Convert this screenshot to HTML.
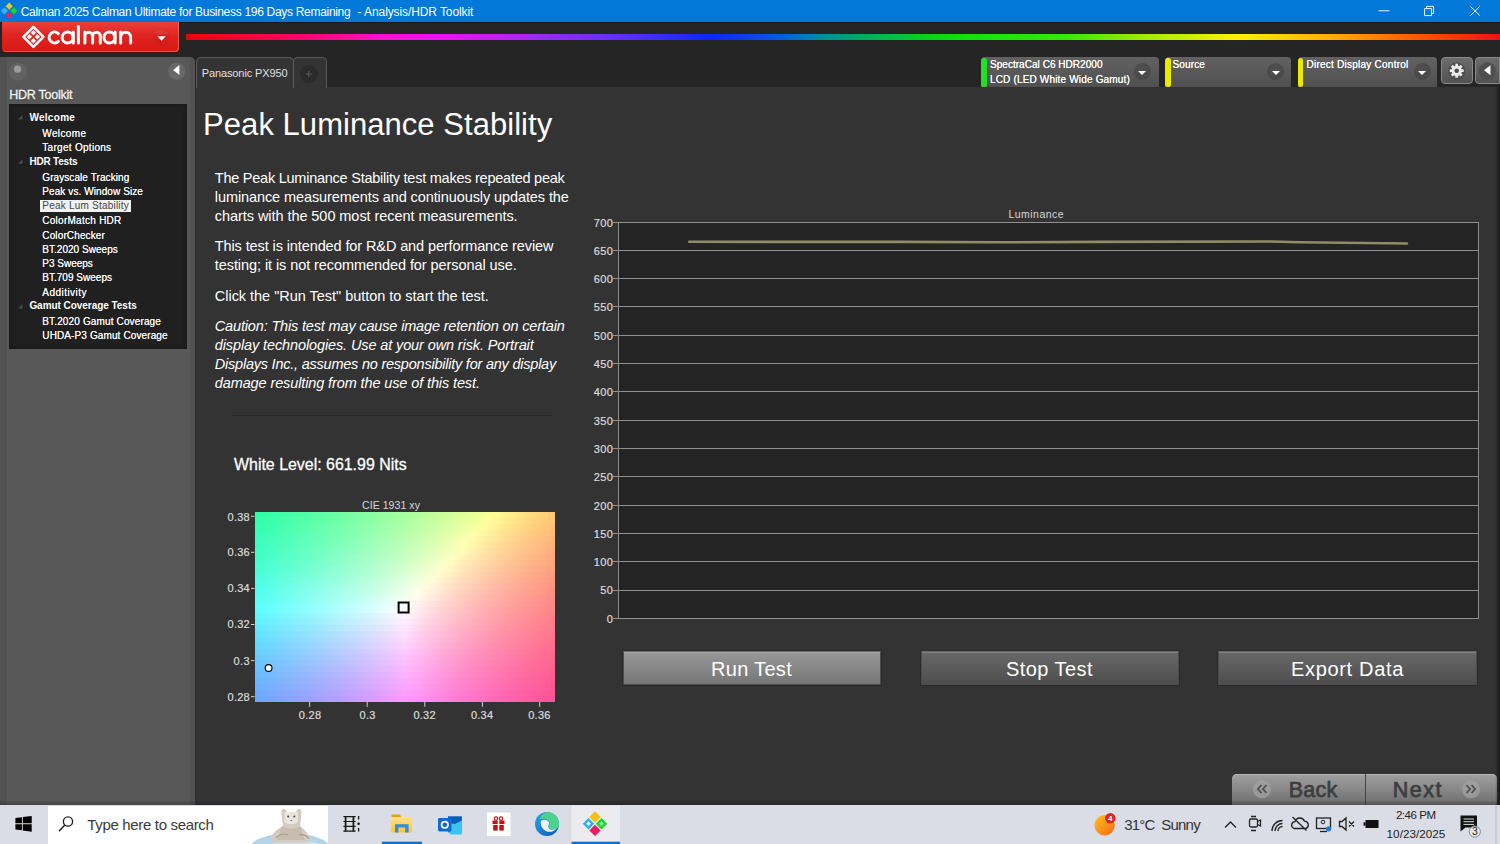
<!DOCTYPE html>
<html><head><meta charset="utf-8"><title>Calman</title>
<style>
*{box-sizing:border-box;margin:0;padding:0}
html,body{width:1500px;height:844px;overflow:hidden;background:#333333;font-family:"Liberation Sans",sans-serif;color:#fff}
.abs{position:absolute}
.t{position:absolute;white-space:pre;line-height:normal}
#titlebar{left:0;top:0;width:1500px;height:23.1px;background:#0278d8}
#topband{left:0;top:22.3px;width:1500px;height:65.2px;background:#252525;border-top:0.9px solid #0c1a28}
#calbtn{left:1.5px;top:22.3px;width:177.3px;height:29.7px;border-radius:0 0 4px 4px;background:linear-gradient(#e8403a 0%,#e02420 45%,#d81814 100%);box-shadow:inset -1px -1px 0 rgba(255,170,160,.4),0 1px 1px #501010}
#rainbow{left:185.6px;top:34.4px;width:1314.4px;height:5.6px;border-radius:1px 0 0 1px;background:linear-gradient(90deg,#f00000 0%,#ff0060 8%,#ff10d0 15%,#f010f0 19%,#a828f0 26%,#6030f8 33%,#0828ff 40%,#0858e0 45%,#0088a8 48%,#00a868 51%,#08d020 56%,#10e010 59%,#38e808 67%,#a0ec00 73%,#fff000 80%,#ffb000 87%,#ff6000 93%,#f01010 100%)}
#sidebar{left:0;top:57.3px;width:194.6px;height:748px;background:#525252;border-radius:0 5px 0 0}
#sideinner{left:6.6px;top:57.3px;width:183.6px;height:748px;background:#585858}
#tree{left:9.3px;top:103.7px;width:177.3px;height:245px;background:#202020;box-shadow:inset 0 0 3px 1px #181818}
#sel{left:40px;top:199.5px;width:90.6px;height:12.3px;background:#f2f2f2}
#main{left:195.5px;top:87.3px;width:1304.5px;height:718px;background:#333333}
.tab{top:57px;height:30.5px;background:#343434;border:1px solid #5a5a5a;border-bottom:none;border-radius:5px 5px 0 0}
.selbox{top:57px;height:30px;border-radius:4px 4px 0 0;background:linear-gradient(#626262,#505050);overflow:hidden}
.selbox i{position:absolute;left:0;top:0.5px;width:5.8px;height:29.5px;border-radius:2.5px}
.dd{width:17px;height:17px;border-radius:50%;background:radial-gradient(circle at 50% 30%,#505050,#464646)}
.dd:after{content:"";position:absolute;left:4.2px;top:7.9px;border-left:4.3px solid transparent;border-right:4.3px solid transparent;border-top:4.8px solid #fff}
.btn{top:651px;height:34.3px;border:1px solid #4c4c4c;border-top-color:#6a6a6a;box-shadow:inset 0 1px 0 rgba(255,255,255,.16),0 0 0 1px #2b2b2b}
#taskbar{left:0;top:804.8px;width:1500px;height:39.2px;background:#dadde5}
#search{left:47.6px;top:805.5px;width:280px;height:38.5px;background:#fff;overflow:hidden}
</style></head><body>
<div id="titlebar" class="abs"></div>
<div id="topband" class="abs"></div>
<div id="calbtn" class="abs"></div>
<div id="rainbow" class="abs"></div>
<div id="sidebar" class="abs"></div>
<div id="sideinner" class="abs"></div>
<div id="tree" class="abs"></div>
<div id="sel" class="abs"></div>
<div id="main" class="abs"></div>
<div class="abs" style="left:194.6px;top:87.3px;width:1.8px;height:714px;background:#2d2d2d"></div>
<!-- tabs -->
<div class="abs tab" style="left:196px;width:97.5px"></div>
<div class="abs tab" style="left:292.5px;width:34.2px"></div>
<div class="abs" style="left:299.7px;top:65px;width:18px;height:18px;border-radius:50%;background:#2b2b2b"></div>
<!-- selectors -->
<div class="abs selbox" style="left:981px;width:178px"><i style="background:#22e022"></i></div>
<div class="abs selbox" style="left:1164.8px;width:126.4px"><i style="background:#eaea00"></i></div>
<div class="abs selbox" style="left:1297.6px;width:139.4px"><i style="background:#eaea00"></i></div>
<div class="abs dd" style="left:1134.3px;top:62.7px"></div>
<div class="abs dd" style="left:1267.4px;top:62.7px"></div>
<div class="abs dd" style="left:1413.7px;top:62.7px"></div>
<div class="abs" style="left:1440.6px;top:57.2px;width:32px;height:27.3px;border-radius:4px;background:linear-gradient(#6c6c6c,#525252);border:1.2px solid #8a8a8a"></div>
<div class="abs" style="left:1474.5px;top:57.2px;width:25.5px;height:27.3px;border-radius:4px 0 0 4px;border-right:none;background:linear-gradient(#6c6c6c,#525252);border:1.2px solid #8a8a8a"></div>
<!-- separator -->
<div class="abs" style="left:232px;top:414.5px;width:320px;height:1px;background:#272727"></div>
<!-- buttons -->
<div class="abs btn" style="left:622.8px;width:258px;background:linear-gradient(#989898,#8a8a8a 40%,#767676)"></div>
<div class="abs btn" style="left:921px;width:258px;background:linear-gradient(#686868,#4e4e4e)"></div>
<div class="abs btn" style="left:1218px;width:259px;background:linear-gradient(#686868,#4e4e4e)"></div>
<!-- back/next -->
<div class="abs" style="left:1232px;top:774px;width:264.6px;height:31px;border-radius:5px 5px 0 0;background:linear-gradient(#a0a0a0,#8a8a8a 45%,#6c6c6c);box-shadow:inset 0 1px 0 #b4b4b4"></div>
<div class="abs" style="left:1364.7px;top:774px;width:1.2px;height:31px;background:#444"></div>
<div class="abs" style="left:617.9px;top:222.1px;width:861.2px;height:396.6px;background:#242424;border:1px solid #8e8e8e"></div>
<div class="abs" style="left:613.4px;top:222px;width:865.7px;height:1px;background:#919191"></div><div class="abs" style="left:613.4px;top:250px;width:865.7px;height:1px;background:#919191"></div><div class="abs" style="left:613.4px;top:278px;width:865.7px;height:1px;background:#919191"></div><div class="abs" style="left:613.4px;top:306px;width:865.7px;height:1px;background:#919191"></div><div class="abs" style="left:613.4px;top:335px;width:865.7px;height:1px;background:#919191"></div><div class="abs" style="left:613.4px;top:363px;width:865.7px;height:1px;background:#919191"></div><div class="abs" style="left:613.4px;top:391px;width:865.7px;height:1px;background:#919191"></div><div class="abs" style="left:613.4px;top:420px;width:865.7px;height:1px;background:#919191"></div><div class="abs" style="left:613.4px;top:448px;width:865.7px;height:1px;background:#919191"></div><div class="abs" style="left:613.4px;top:476px;width:865.7px;height:1px;background:#919191"></div><div class="abs" style="left:613.4px;top:505px;width:865.7px;height:1px;background:#919191"></div><div class="abs" style="left:613.4px;top:533px;width:865.7px;height:1px;background:#919191"></div><div class="abs" style="left:613.4px;top:561px;width:865.7px;height:1px;background:#919191"></div><div class="abs" style="left:613.4px;top:590px;width:865.7px;height:1px;background:#919191"></div><div class="abs" style="left:613.4px;top:618px;width:865.7px;height:1px;background:#919191"></div>
<svg class="abs" style="left:0;top:0" width="1500" height="844"><polyline points="689.3,241.8 900,241.9 1000,242.3 1100,241.9 1270,241.5 1300,242.2 1407,243.5" fill="none" stroke="#8e8e66" stroke-width="2.6" stroke-linecap="round"/></svg>
<div class="abs" style="left:254.7px;top:512.3px;width:300.8px;height:189.5px;overflow:hidden"><div style="height:5.9219px;background:linear-gradient(90deg,#2cffa9,#34ffa8,#3dffa8,#46ffa7,#4fffa6,#58ffa5,#61ffa5,#6bffa4,#74ffa3,#7effa2,#88ffa1,#92ffa1,#9cffa0,#a7ff9f,#b2ff9e,#bdff9d,#c8ff9c,#d3ff9b,#dfff9a,#ebff99,#f7ff98,#fffb94,#ffef8d,#ffe485,#ffda7e,#ffd178,#ffc872)"></div><div style="height:5.9219px;background:linear-gradient(90deg,#2effae,#37ffad,#40ffac,#49ffac,#52ffab,#5bffaa,#64ffa9,#6effa9,#78ffa8,#82ffa7,#8cffa6,#96ffa5,#a1ffa4,#abffa4,#b6ffa3,#c2ffa2,#cdffa1,#d9ffa0,#e4ff9f,#f1ff9e,#fdff9d,#fff596,#ffe98e,#ffdf87,#ffd580,#ffcc79,#ffc373)"></div><div style="height:5.9219px;background:linear-gradient(90deg,#31ffb2,#39ffb1,#42ffb1,#4bffb0,#55ffaf,#5effaf,#68ffae,#71ffad,#7bffad,#86ffac,#90ffab,#9affaa,#a5ffa9,#b0ffa9,#bbffa8,#c7ffa7,#d2ffa6,#deffa5,#eaffa4,#f7ffa3,#fffba0,#ffef97,#ffe48f,#ffda88,#ffd081,#ffc77b,#ffbf75)"></div><div style="height:5.9219px;background:linear-gradient(90deg,#33ffb7,#3cffb6,#45ffb6,#4effb5,#58ffb4,#61ffb4,#6bffb3,#75ffb2,#7fffb1,#8affb1,#94ffb0,#9fffaf,#aaffae,#b5ffae,#c0ffad,#ccffac,#d8ffab,#e4ffaa,#f0ffaa,#fdffa9,#fff5a1,#ffe999,#ffde91,#ffd489,#ffcb83,#ffc27c,#ffba76)"></div><div style="height:5.9219px;background:linear-gradient(90deg,#36ffbc,#3fffbb,#48ffba,#52ffba,#5bffb9,#65ffb9,#6fffb8,#79ffb7,#83ffb7,#8effb6,#98ffb5,#a3ffb4,#aeffb4,#baffb3,#c5ffb2,#d1ffb1,#ddffb1,#eaffb0,#f6ffaf,#fffbab,#ffefa2,#ffe49a,#ffd992,#ffcf8b,#ffc684,#ffbe7e,#ffb678)"></div><div style="height:5.9219px;background:linear-gradient(90deg,#39ffc0,#42ffc0,#4bffbf,#55ffbf,#5effbe,#68ffbe,#72ffbd,#7dffbc,#87ffbc,#92ffbb,#9dffba,#a8ffba,#b3ffb9,#bfffb8,#cbffb8,#d7ffb7,#e3ffb6,#f0ffb5,#fdffb5,#fff5ad,#ffe9a4,#ffde9b,#ffd493,#ffca8c,#ffc185,#ffb97f,#ffb179)"></div><div style="height:5.9219px;background:linear-gradient(90deg,#3bffc6,#45ffc5,#4effc4,#58ffc4,#62ffc3,#6cffc3,#76ffc2,#81ffc2,#8bffc1,#96ffc1,#a1ffc0,#adffbf,#b8ffbf,#c4ffbe,#d0ffbd,#dcffbd,#e9ffbc,#f6ffbb,#fffbb8,#ffefae,#ffe3a5,#ffd89c,#ffcf95,#ffc58d,#ffbd87,#ffb580,#ffad7a)"></div><div style="height:5.9219px;background:linear-gradient(90deg,#3effcb,#48ffca,#51ffca,#5bffc9,#65ffc9,#6fffc8,#7affc8,#85ffc7,#90ffc7,#9bffc6,#a6ffc6,#b2ffc5,#bdffc4,#c9ffc4,#d6ffc3,#e2ffc3,#efffc2,#fcffc1,#fff5b9,#ffe9af,#ffdda6,#ffd39e,#ffc996,#ffc08f,#ffb888,#ffb081,#ffa97b)"></div><div style="height:5.9219px;background:linear-gradient(90deg,#41ffd0,#4bffd0,#55ffcf,#5fffcf,#69ffce,#73ffce,#7effcd,#89ffcd,#94ffcc,#9fffcc,#abffcb,#b7ffcb,#c3ffca,#cfffca,#dcffc9,#e8ffc9,#f6ffc8,#fffbc4,#ffeeba,#ffe3b0,#ffd8a7,#ffce9f,#ffc497,#ffbc90,#ffb389,#ffac83,#ffa47d)"></div><div style="height:5.9219px;background:linear-gradient(90deg,#44ffd5,#4effd5,#58ffd5,#62ffd4,#6dffd4,#77ffd3,#82ffd3,#8dffd3,#98ffd2,#a4ffd2,#b0ffd1,#bcffd1,#c8ffd0,#d5ffd0,#e2ffcf,#efffcf,#fcffce,#fff5c5,#ffe8bb,#ffddb1,#ffd2a8,#ffc9a0,#ffbf98,#ffb791,#ffaf8a,#ffa784,#ffa07e)"></div><div style="height:5.9219px;background:linear-gradient(90deg,#47ffdb,#51ffdb,#5bffda,#66ffda,#70ffda,#7bffd9,#86ffd9,#92ffd9,#9dffd8,#a9ffd8,#b5ffd7,#c1ffd7,#ceffd7,#dbffd6,#e8ffd6,#f5ffd5,#fffbd2,#ffeec6,#ffe2bc,#ffd7b2,#ffcdaa,#ffc3a1,#ffba9a,#ffb292,#ffaa8c,#ffa385,#ff9c7f)"></div><div style="height:5.9219px;background:linear-gradient(90deg,#4affe1,#54ffe1,#5fffe0,#69ffe0,#74ffe0,#7fffdf,#8bffdf,#96ffdf,#a2ffdf,#aeffde,#baffde,#c7ffde,#d4ffdd,#e1ffdd,#eeffdc,#fcffdc,#fff4d3,#ffe8c7,#ffdcbd,#ffd2b4,#ffc8ab,#ffbea2,#ffb69b,#ffae93,#ffa68d,#ff9f86,#ff9880)"></div><div style="height:5.9219px;background:linear-gradient(90deg,#4effe7,#58ffe7,#62ffe6,#6dffe6,#78ffe6,#84ffe6,#8fffe5,#9bffe5,#a7ffe5,#b3ffe5,#c0ffe4,#cdffe4,#daffe4,#e7ffe4,#f5ffe3,#fffbe0,#ffeed3,#ffe2c8,#ffd6be,#ffccb5,#ffc2ac,#ffb9a4,#ffb19c,#ffa995,#ffa28e,#ff9b88,#ff9482)"></div><div style="height:5.9219px;background:linear-gradient(90deg,#51ffed,#5bffed,#66ffed,#71ffed,#7dffec,#88ffec,#94ffec,#a0ffec,#acffec,#b9ffeb,#c5ffeb,#d2ffeb,#e0ffeb,#eeffeb,#fcffea,#fff4e0,#ffe8d4,#ffdcc9,#ffd1bf,#ffc7b6,#ffbdad,#ffb4a5,#ffac9d,#ffa596,#ff9d8f,#ff9789,#ff9083)"></div><div style="height:5.9219px;background:linear-gradient(90deg,#54fff3,#5ffff3,#6afff3,#75fff3,#81fff3,#8dfff3,#99fff3,#a5fff3,#b1fff3,#befff2,#cbfff2,#d9fff2,#e6fff2,#f4fff2,#fffbee,#ffeee1,#ffe1d5,#ffd6ca,#ffcbc0,#ffc1b7,#ffb8ae,#ffb0a6,#ffa89e,#ffa097,#ff9990,#ff928a,#ff8c84)"></div><div style="height:5.9219px;background:linear-gradient(90deg,#58fffa,#63fffa,#6efffa,#7afffa,#85fffa,#91fffa,#9dfffa,#aafffa,#b7fffa,#c4fffa,#d1fffa,#dffffa,#edfff9,#fbfff9,#fff4ef,#ffe7e2,#ffdbd6,#ffd0cb,#ffc6c1,#ffbcb8,#ffb3af,#ffaba7,#ffa39f,#ff9c98,#ff9591,#ff8e8b,#ff8885)"></div><div style="height:5.9219px;background:linear-gradient(90deg,#5bfdff,#66fdff,#71fdff,#7dfdff,#89fdff,#95fdff,#a1fdff,#aefdff,#bbfdff,#c8fdff,#d6fdff,#e4fdff,#f2fdff,#fffbfe,#ffedf0,#ffe1e3,#ffd5d7,#ffcacc,#ffc0c2,#ffb7b9,#ffaeb0,#ffa6a8,#ff9fa0,#ff9799,#ff9193,#ff8b8c,#ff8586)"></div><div style="height:5.9219px;background:linear-gradient(90deg,#5cf7ff,#67f7ff,#73f6ff,#7ef6ff,#8af6ff,#96f6ff,#a2f6ff,#aef6ff,#bbf6ff,#c8f6ff,#d6f5ff,#e3f5ff,#f2f5ff,#fff4fe,#ffe7f0,#ffdae4,#ffcfd8,#ffc5cd,#ffbbc3,#ffb2ba,#ffa9b1,#ffa2a9,#ff9aa1,#ff939a,#ff8d94,#ff878d,#ff8187)"></div><div style="height:5.9219px;background:linear-gradient(90deg,#5ef0ff,#68f0ff,#74f0ff,#7ff0ff,#8befff,#96efff,#a2efff,#afefff,#bcefff,#c8eeff,#d6eeff,#e3eeff,#f1eeff,#ffedff,#ffe0f1,#ffd4e4,#ffc9d9,#ffbfce,#ffb6c4,#ffadbb,#ffa5b2,#ff9daa,#ff96a2,#ff8f9b,#ff8995,#ff838e,#ff7d89)"></div><div style="height:5.9219px;background:linear-gradient(90deg,#5feaff,#6ae9ff,#75e9ff,#80e9ff,#8be9ff,#97e8ff,#a3e8ff,#afe8ff,#bce8ff,#c9e7ff,#d6e7ff,#e3e7ff,#f1e6ff,#ffe6ff,#ffdaf2,#ffcee5,#ffc3da,#ffbacf,#ffb0c5,#ffa8bc,#ffa0b3,#ff98ab,#ff92a4,#ff8b9c,#ff8596,#ff7f90,#ff7a8a)"></div><div style="height:5.9219px;background:linear-gradient(90deg,#60e3ff,#6be3ff,#76e3ff,#81e2ff,#8ce2ff,#98e2ff,#a4e2ff,#b0e1ff,#bce1ff,#c9e0ff,#d6e0ff,#e3e0ff,#f0dfff,#fedfff,#ffd3f2,#ffc8e6,#ffbeda,#ffb4d0,#ffabc6,#ffa3bd,#ff9bb4,#ff94ac,#ff8da5,#ff879e,#ff8197,#ff7b91,#ff768b)"></div><div style="height:5.9219px;background:linear-gradient(90deg,#61ddff,#6cddff,#77ddff,#82dcff,#8ddcff,#98dbff,#a4dbff,#b0dbff,#bcdaff,#c9daff,#d6d9ff,#e3d9ff,#f0d8ff,#fed8ff,#ffcdf3,#ffc2e7,#ffb8db,#ffafd1,#ffa6c7,#ff9ebe,#ff97b5,#ff90ad,#ff89a6,#ff839f,#ff7d98,#ff7892,#ff728c)"></div><div style="height:5.9219px;background:linear-gradient(90deg,#62d7ff,#6dd7ff,#77d6ff,#82d6ff,#8ed6ff,#99d5ff,#a5d5ff,#b0d4ff,#bdd4ff,#c9d3ff,#d6d3ff,#e2d2ff,#f0d2ff,#fdd1ff,#ffc7f4,#ffbde7,#ffb3dc,#ffaad1,#ffa1c8,#ff9abf,#ff92b6,#ff8bae,#ff85a7,#ff7fa0,#ff7999,#ff7493,#ff6f8d)"></div><div style="height:5.9219px;background:linear-gradient(90deg,#63d1ff,#6ed1ff,#78d0ff,#83d0ff,#8ecfff,#9acfff,#a5ceff,#b1ceff,#bdcdff,#c9cdff,#d5ccff,#e2ccff,#efcbff,#fdcaff,#ffc1f4,#ffb7e8,#ffaddd,#ffa5d2,#ff9dc9,#ff95bf,#ff8eb7,#ff87af,#ff81a8,#ff7ba1,#ff769a,#ff7094,#ff6b8e)"></div><div style="height:5.9219px;background:linear-gradient(90deg,#65ccff,#6fcbff,#79cbff,#84caff,#8fc9ff,#9ac9ff,#a5c8ff,#b1c8ff,#bdc7ff,#c9c6ff,#d5c6ff,#e2c5ff,#efc4ff,#fcc4ff,#ffbbf5,#ffb1e9,#ffa8dd,#ffa0d3,#ff98c9,#ff90c0,#ff8ab8,#ff83b0,#ff7da9,#ff77a2,#ff729b,#ff6d95,#ff688f)"></div><div style="height:5.9219px;background:linear-gradient(90deg,#66c6ff,#70c5ff,#7ac5ff,#85c4ff,#90c4ff,#9bc3ff,#a6c2ff,#b1c2ff,#bdc1ff,#c9c0ff,#d5c0ff,#e2bfff,#efbeff,#fcbdff,#ffb5f5,#fface9,#ffa3de,#ff9bd4,#ff93ca,#ff8cc1,#ff85b9,#ff7fb1,#ff79aa,#ff73a3,#ff6e9c,#ff6996,#ff6590)"></div><div style="height:5.9219px;background:linear-gradient(90deg,#67c0ff,#71c0ff,#7bbfff,#86beff,#90beff,#9bbdff,#a6bcff,#b2bcff,#bdbbff,#c9baff,#d5baff,#e2b9ff,#eeb8ff,#fbb7ff,#ffb0f6,#ffa7ea,#ff9edf,#ff96d5,#ff8ecb,#ff88c2,#ff81ba,#ff7bb2,#ff75ab,#ff70a4,#ff6b9d,#ff6697,#ff6191)"></div><div style="height:5.9219px;background:linear-gradient(90deg,#68bbff,#72baff,#7cbaff,#86b9ff,#91b8ff,#9cb7ff,#a7b7ff,#b2b6ff,#beb5ff,#c9b4ff,#d5b4ff,#e2b3ff,#eeb2ff,#fbb1ff,#ffaaf6,#ffa1eb,#ff99e0,#ff91d5,#ff8acc,#ff83c3,#ff7dbb,#ff77b3,#ff71ab,#ff6ca5,#ff679e,#ff6298,#ff5e92)"></div><div style="height:5.9219px;background:linear-gradient(90deg,#69b6ff,#73b5ff,#7db4ff,#87b3ff,#92b3ff,#9cb2ff,#a7b1ff,#b2b0ff,#beafff,#c9afff,#d5aeff,#e1adff,#eeacff,#faabff,#ffa5f7,#ff9ceb,#ff94e0,#ff8cd6,#ff85cd,#ff7fc4,#ff79bc,#ff73b4,#ff6eac,#ff68a5,#ff649f,#ff5f99,#ff5b93)"></div><div style="height:5.9219px;background:linear-gradient(90deg,#6ab0ff,#74b0ff,#7eafff,#88aeff,#92adff,#9dacff,#a8acff,#b3abff,#beaaff,#caa9ff,#d5a8ff,#e1a7ff,#eda6ff,#faa5ff,#ff9ff8,#ff97ec,#ff8fe1,#ff88d7,#ff81cd,#ff7bc5,#ff75bc,#ff6fb5,#ff6aad,#ff65a6,#ff60a0,#ff5c9a,#ff5794)"></div><div style="height:5.9219px;background:linear-gradient(90deg,#6babff,#74aaff,#7eaaff,#89a9ff,#93a8ff,#9da7ff,#a8a6ff,#b3a5ff,#bea4ff,#caa3ff,#d5a2ff,#e1a2ff,#eda1ff,#faa0ff,#ff9af8,#ff92ec,#ff8ae2,#ff83d8,#ff7dce,#ff76c5,#ff71bd,#ff6bb5,#ff66ae,#ff61a7,#ff5da1,#ff589b,#ff5495)"></div><div style="height:5.9219px;background:linear-gradient(90deg,#6ca6ff,#75a5ff,#7fa4ff,#89a4ff,#94a3ff,#9ea2ff,#a9a1ff,#b3a0ff,#be9fff,#ca9eff,#d59dff,#e19cff,#ed9bff,#f99aff,#ff95f9,#ff8ded,#ff86e2,#ff7fd8,#ff78cf,#ff72c6,#ff6dbe,#ff67b6,#ff62af,#ff5ea8,#ff59a2,#ff559c,#ff5196)"></div></div>
<div class="abs" style="left:0;top:801.3px;width:1500px;height:3.6px;background:linear-gradient(rgba(0,0,0,.08),rgba(0,0,0,.22))"></div>
<div class="abs" style="left:1494.5px;top:87px;width:5.5px;height:718px;background:linear-gradient(90deg,rgba(0,0,0,0),rgba(0,0,0,.5))"></div>
<div id="taskbar" class="abs"></div>
<div id="search" class="abs"></div>
<svg class="abs" style="left:0;top:0" width="1500" height="844" viewBox="0 0 1500 844">
<defs>
<radialGradient id="gball" cx="50%" cy="35%" r="65%"><stop offset="0" stop-color="#6e6e6e"/><stop offset="1" stop-color="#5e5e5e"/></radialGradient>
<linearGradient id="gsun" x1="0" y1="0" x2="1" y2="1"><stop offset="0" stop-color="#ffc028"/><stop offset="1" stop-color="#f86a10"/></linearGradient>
<linearGradient id="gfold" x1="0" y1="0" x2="0" y2="1"><stop offset="0" stop-color="#ffe08a"/><stop offset="1" stop-color="#ffc530"/></linearGradient>
<linearGradient id="gedge" x1="0" y1="0" x2="1" y2="1"><stop offset="0" stop-color="#2aa6e8"/><stop offset="1" stop-color="#0c58b8"/></linearGradient>
</defs>
<!-- title bar app icon -->
<g>
<path d="M9.2 2.6 12.7 6.2 9.2 9.8 5.7 6.2Z" fill="#f2c81c"/>
<path d="M13.8 7.2 17.4 10.8 13.8 14.4 10.2 10.8Z" fill="#14d824"/>
<path d="M9.2 11.8 12.7 15.4 9.2 19 5.7 15.4Z" fill="#f0205c"/>
<path d="M4.4 7.2 8 10.8 4.4 14.4 0.8 10.8Z" fill="#38b0f0"/>
</g>
<!-- window controls -->
<g stroke="#fff" stroke-width="1" fill="none" opacity=".92">
<path d="M1378.5 10.8H1389.5"/>
<path d="M1424.6 8.6h7v7h-7z"/><path d="M1426.6 8.4V6.4h7v7h-2"/>
<path d="M1470.4 6.4 1479.8 15.6M1479.8 6.4 1470.4 15.6"/>
</g>
<!-- calman logo -->
<g fill="none" stroke="#fff" stroke-width="2.5" stroke-linejoin="round">
<path d="M33.4 26.8 43.4 36.8 33.4 46.8 23.4 36.8Z"/>
</g>
<g fill="#fff">
<path d="M33.40 30.05 36.15 32.80 33.40 35.55 30.65 32.80Z"/>
<path d="M37.40 34.05 40.15 36.80 37.40 39.55 34.65 36.80Z"/>
<path d="M29.40 34.05 32.15 36.80 29.40 39.55 26.65 36.80Z"/>
<path d="M33.40 38.05 36.15 40.80 33.40 43.55 30.65 40.80Z"/>
</g>
<g fill="none" stroke="#fff" stroke-width="3" stroke-linecap="round" stroke-linejoin="round">
<path d="M58.3 33.6A5.4 5.4 0 1 0 58.3 41.4"/>
<circle cx="67.6" cy="37.5" r="5.4"/><path d="M73.3 32.1V42.9"/>
<path d="M78.4 26.5V42.9"/>
<path d="M84.9 32.1V42.9M84.9 36A3.85 3.85 0 0 1 92.6 36V42.9M92.6 36A3.85 3.85 0 0 1 100.3 36V42.9"/>
<circle cx="109.4" cy="37.5" r="5.4"/><path d="M115.1 32.1V42.9"/>
<path d="M120.6 32.1V42.9M120.6 37.2A5 5 0 0 1 130.6 37.2V42.9"/>
</g>
<circle cx="161.3" cy="37.4" r="8.3" fill="#c41c1c" opacity=".35"/><path d="M153.6 34.6a8.3 8.3 0 0 1 15.4 0z" fill="#f06a60" opacity=".25"/>
<path d="M157.4 36.2h8.4l-4.2 4.6z" fill="#fff"/>
<!-- sidebar header buttons -->
<circle cx="18" cy="71.7" r="9" fill="#626262"/><circle cx="17.6" cy="69.2" r="3.6" fill="#9c9c9c"/>
<circle cx="176.7" cy="71.2" r="8.6" fill="#686868"/><path d="M173.2 70 179.4 65V75Z" fill="#fff"/>
<!-- tree expanders -->
<g fill="#4c4c4c"><path d="M22.3 115.3v4.300h-4.300z"/><path d="M22.300 159.500v4.300h-4.300z"/><path d="M22.300 304.200v4.300h-4.300z"/></g>
<!-- tab plus -->
<path d="M308.7 71v6M305.7 74h6" stroke="#4e4e4e" stroke-width="1.4"/>
<!-- gear + arrow -->
<circle cx="1456.7" cy="70.8" r="8.6" fill="#4e4e4e"/>
<g transform="translate(1456.7 70.7)" fill="#ececec">
<circle r="3.75" fill="none" stroke="#ececec" stroke-width="2.9"/>
<g transform="rotate(0)"><rect x="-1.35" y="-7" width="2.7" height="2.6"/><rect x="-1.35" y="4.4" width="2.7" height="2.6"/></g><g transform="rotate(45)"><rect x="-1.35" y="-7" width="2.7" height="2.6"/><rect x="-1.35" y="4.4" width="2.7" height="2.6"/></g><g transform="rotate(90)"><rect x="-1.35" y="-7" width="2.7" height="2.6"/><rect x="-1.35" y="4.4" width="2.7" height="2.6"/></g><g transform="rotate(135)"><rect x="-1.35" y="-7" width="2.7" height="2.6"/><rect x="-1.35" y="4.4" width="2.7" height="2.6"/></g>
</g>
<circle cx="1487.3" cy="70.8" r="8.6" fill="#4e4e4e"/><path d="M1484 70.3 1490.5 65.3V75.3Z" fill="#fff"/>
<!-- CIE ticks + markers -->
<g stroke="#d0d0d0" stroke-width="1"><path d="M309.6 702v4.8M367.2 702v4.8M424.8 702v4.8M482.4 702v4.8M539.7 702v4.8"/>
<path d="M251 516.3h3.5M251 552.3h3.5M251 588.4h3.5M251 624.5h3.5M251 660.6h3.5M251 696.7h3.5"/></g>
<rect x="398.6" y="602.5" width="10" height="10" fill="none" stroke="#000" stroke-width="2"/>
<circle cx="268.6" cy="668" r="3.4" fill="#fff" stroke="#000" stroke-width="1.1"/>
<!-- back / next icons -->
<circle cx="1262" cy="789.3" r="9" fill="#a2a2a2" opacity=".75"/><circle cx="1471" cy="789.3" r="9" fill="#a2a2a2" opacity=".75"/>
<g fill="none" stroke="#505050" stroke-width="1.8"><path d="M1261.5 785l-3.6 4 3.6 4M1266.5 785l-3.6 4 3.6 4"/><path d="M1466.5 785l3.6 4-3.6 4M1471.5 785l3.6 4-3.6 4"/></g>
<!-- ===== taskbar ===== -->
<path d="M15.4 818.1 21.9 817.2V823.3H15.4ZM22.8 817.1 31.7 815.9V823.3H22.8ZM15.4 824.2H21.9V830.3L15.4 829.4ZM22.8 824.2H31.7V831.7L22.8 830.4Z" fill="#000"/>
<circle cx="68" cy="821.5" r="4.6" fill="none" stroke="#222" stroke-width="1.4"/><path d="M64.8 825 59 831.2" stroke="#222" stroke-width="1.5"/>
<!-- snow leopard-ish -->
<g>
<ellipse cx="290" cy="848" rx="40" ry="14.5" fill="#b4d2e8"/>
<ellipse cx="296" cy="850" rx="30" ry="10" fill="#cfe2f0"/>
<path d="M271 840c1-7 6-11 12-14l-1.500-12c-.5-5 2.500-7 5-3l1.500 2h7l1.500-2c2.500-4 5.500-2 5 3l-1.500 12c5 4 9 8 10 14 .3 2-2 3-4 3h-31c-3 0-4-1-4-3z" fill="#d4ccc2"/>
<path d="M284.500 812h13.500v9.500c-2.500 3.500-11 3.500-13.500 0z" fill="#e8e4de"/>
<path d="M282 826c4 3.500 14 3.500 18 0l5 14h-28z" fill="#c6bcb0"/>
<path d="M276 838c3-4 8-5 12-3M299 835c4-1 8 1 10 4" stroke="#a89c8e" stroke-width="1.200" fill="none"/>
<circle cx="288.200" cy="816.600" r="1" fill="#444"/><circle cx="294.300" cy="816.600" r="1" fill="#444"/>
<path d="M290 820h2.500l-1.250 1.300z" fill="#866"/>
</g>
<!-- task view -->
<g fill="none" stroke="#1a1a1a"><path d="M345.6 816v15.600M353.400 816v15.600" stroke-width="1.700"/><path d="M343.400 816.600h12.200M343.400 821.500h12.200M343.400 826.300h12.200M343.400 831.100h12.200" stroke-width="1.200"/><path d="M358.600 816v3.600M358.600 828v3.600" stroke-width="1.300"/></g>
<circle cx="358.600" cy="823.800" r="1.300" fill="#1a1a1a"/>
<!-- explorer -->
<path d="M391.5 814.6h8.5l1.4 2.6H391.5z" fill="#e4a406"/>
<rect x="390.8" y="817" width="21.4" height="15.4" rx="1" fill="url(#gfold)"/>
<path d="M395 832.4v-8.2h13.6v8.2h-3.4v-5h-6.8v5z" fill="#2f8de2"/>
<rect x="382" y="841.7" width="40" height="2.3" fill="#0a70d2"/>
<!-- outlook -->
<path d="M448 816.5 461.8 816.5V832.5H448z" fill="#1c78d4"/>
<path d="M450 824.5 461.8 820V834.5H450z" fill="#3ec4f2"/>
<path d="M448 816.5h13.8v4l-7 3.6-6.8-2z" fill="#0c5cb4"/>
<rect x="438" y="818" width="13.5" height="13.5" rx="1.4" fill="#0c6cd0"/>
<circle cx="444.8" cy="824.8" r="3.2" fill="none" stroke="#fff" stroke-width="1.7"/>
<!-- gift -->
<rect x="487" y="812.5" width="23.5" height="23.5" fill="#fff"/>
<g fill="#c01212"><rect x="492.5" y="820.5" width="5.2" height="3.6"/><rect x="499.3" y="820.5" width="5.2" height="3.6"/><rect x="493.2" y="825" width="4.5" height="5.6"/><rect x="499.3" y="825" width="4.5" height="5.6"/>
<circle cx="496" cy="818.6" r="1.7" fill="none" stroke="#c01212" stroke-width="1.1"/><circle cx="501" cy="818.6" r="1.7" fill="none" stroke="#c01212" stroke-width="1.1"/></g>
<!-- edge -->
<circle cx="547" cy="824" r="12" fill="url(#gedge)"/>
<path d="M548.500 812.100A12 12 0 0 1 558.900 825.500c-.6 2.800-3 4.300-5.700 4.300-2.600 0-4.500-1.400-4.500-3.400 0-1 .4-1.900 1.100-2.500-.3-3-3-5.200-6.400-5.200-1.500 0-2.900.4-4 1.200 1.500-4.500 5-7.500 9.100-7.800z" fill="#4bd38c"/>
<path d="M540.800 821.200c2.800-2.400 8-1.600 8.600 2.700-.7.600-1.100 1.500-1.100 2.500 0 2 1.900 3.400 4.500 3.400 1.200 0 2.300-.3 3.200-.8-2.600 3.400-8.200 3.800-11.800.9-2.700-2.200-4-5.600-3.400-8.700z" fill="#e9f3fb"/>
<!-- calman task icon -->
<rect x="571.5" y="805.500" width="48.500" height="38.500" fill="#ececf0"/>
<rect x="571.500" y="841.700" width="48.500" height="2.300" fill="#0a70d2"/>
<path d="M595 811.300 600.700 817 595 822.700 589.300 817Z" fill="#f6c010"/>
<path d="M601.500 818 607.200 823.700 601.500 829.400 595.800 823.700Z" fill="#18d828"/>
<path d="M595 824.700 600.700 830.400 595 836.100 589.300 830.400Z" fill="#f01860"/>
<path d="M588.500 818 594.200 823.700 588.500 829.400 582.800 823.700Z" fill="#2cb0f0"/>
<path d="M588.500 821.300 590.900 823.700 588.500 826.100 586.100 823.700Z" fill="#ececf0"/>
<path d="M601.500 821.300 603.900 823.700 601.500 826.100 599.100 823.700Z" fill="#ececf0" opacity=".6"/>
<!-- weather -->
<circle cx="1104.600" cy="825.200" r="10.200" fill="url(#gsun)"/>
<circle cx="1110.300" cy="818.300" r="5.200" fill="#d8281c"/>
<text x="1110.300" y="821.300" font-family="Liberation Sans" font-size="8" font-weight="700" fill="#fff" text-anchor="middle">4</text>
<!-- tray -->
<g fill="none" stroke="#222" stroke-width="1.300">
<path d="M1225 827.500l5.500-5.500 5.500 5.500"/>
<rect x="1249.500" y="819" width="8" height="8" rx="1.500"/><path d="M1257.500 821.500l3-1.500v6l-3-1.500M1251 830.500h5M1251 816.500h5"/>
<path d="M1272 831a10.500 10.500 0 0 1 10.500-10.500M1275 831a7.500 7.500 0 0 1 7.500-7.500M1278 831a4.500 4.500 0 0 1 4.500-4.500" />
<path d="M1294 828.500a3.500 3.500 0 0 1 1-6.800 5 5 0 0 1 9.500-.5 3.800 3.800 0 0 1 1.500 7.300zM1292.500 817l14 13.500"/>
<rect x="1316.500" y="818" width="14" height="10.500" /><path d="M1320 831.500h7"/>
<path d="M1339.500 821.500h2.500l4-3.500v12l-4-3.500h-2.500zM1349 821.500l5 5M1354 821.500l-5 5"/>
</g>
<circle cx="1328.600" cy="828.800" r="2.600" fill="#1c7ce0"/>
<circle cx="1323" cy="822" r="1.800" fill="none" stroke="#222" stroke-width="1"/>
<rect x="1365.500" y="820" width="13" height="8" fill="#111"/><rect x="1363.500" y="822.300" width="2" height="3.400" fill="#111"/>
<path d="M1460.500 815.500h16.500v12h-11.500l-5 4z" fill="#111"/>
<path d="M1463.500 819h10.500M1463.500 821.700h10.500M1463.500 824.400h10.500" stroke="#dadfe8" stroke-width="1"/>
<circle cx="1474.800" cy="831.600" r="5.600" fill="#e6e8ee" stroke="#888" stroke-width="1"/>
<text x="1474.800" y="835.400" font-family="Liberation Sans" font-size="10.500" fill="#222" text-anchor="middle">3</text>
<rect x="1495.500" y="805" width="1" height="39" fill="#b8bcc6"/>
</svg>

<div class="t" style="left:20.7px;top:5.2px;font-size:12px;color:#fff;letter-spacing:-0.302px;">Calman 2025 Calman Ultimate for Business 196 Days Remaining</div>
<div class="t" style="left:357.6px;top:5.2px;font-size:12px;color:#fff;letter-spacing:-0.097px;">- Analysis/HDR Toolkit</div>
<div class="t" style="left:9.3px;top:87.7px;font-size:12.5px;color:#f4f4f4;letter-spacing:-0.251px;-webkit-text-stroke:0.3px #f4f4f4;text-shadow:0 1px 1px #333">HDR Toolkit</div>
<div class="t" style="left:29.4px;top:111.5px;font-size:10px;color:#fff;letter-spacing:0.295px;font-weight:700;">Welcome</div>
<div class="t" style="left:42.3px;top:127.8px;font-size:10px;color:#f4f4f4;letter-spacing:0.371px;text-shadow:0 0 0.4px #fff">Welcome</div>
<div class="t" style="left:42.3px;top:142.2px;font-size:10px;color:#f4f4f4;letter-spacing:0.290px;text-shadow:0 0 0.4px #fff">Target Options</div>
<div class="t" style="left:29.4px;top:155.7px;font-size:10px;color:#fff;letter-spacing:-0.192px;font-weight:700;">HDR Tests</div>
<div class="t" style="left:42.3px;top:171.6px;font-size:10px;color:#f4f4f4;letter-spacing:0.078px;text-shadow:0 0 0.4px #fff">Grayscale Tracking</div>
<div class="t" style="left:42.3px;top:186.4px;font-size:10px;color:#f4f4f4;letter-spacing:0.088px;text-shadow:0 0 0.4px #fff">Peak vs. Window Size</div>
<div class="t" style="left:42.3px;top:200.3px;font-size:10px;color:#444;letter-spacing:0.215px;">Peak Lum Stability</div>
<div class="t" style="left:42.3px;top:214.9px;font-size:10px;color:#f4f4f4;letter-spacing:0.266px;text-shadow:0 0 0.4px #fff">ColorMatch HDR</div>
<div class="t" style="left:42.3px;top:229.6px;font-size:10px;color:#f4f4f4;letter-spacing:0.130px;text-shadow:0 0 0.4px #fff">ColorChecker</div>
<div class="t" style="left:42.3px;top:243.6px;font-size:10px;color:#f4f4f4;letter-spacing:0.031px;text-shadow:0 0 0.4px #fff">BT.2020 Sweeps</div>
<div class="t" style="left:42.3px;top:257.8px;font-size:10px;color:#f4f4f4;letter-spacing:-0.010px;text-shadow:0 0 0.4px #fff">P3 Sweeps</div>
<div class="t" style="left:42.3px;top:271.9px;font-size:10px;color:#f4f4f4;letter-spacing:0.015px;text-shadow:0 0 0.4px #fff">BT.709 Sweeps</div>
<div class="t" style="left:42.3px;top:286.6px;font-size:10px;color:#f4f4f4;letter-spacing:0.468px;text-shadow:0 0 0.4px #fff">Additivity</div>
<div class="t" style="left:29.4px;top:300.4px;font-size:10px;color:#fff;letter-spacing:-0.044px;font-weight:700;">Gamut Coverage Tests</div>
<div class="t" style="left:42.3px;top:316.0px;font-size:10px;color:#f4f4f4;letter-spacing:0.140px;text-shadow:0 0 0.4px #fff">BT.2020 Gamut Coverage</div>
<div class="t" style="left:42.3px;top:330.4px;font-size:10px;color:#f4f4f4;letter-spacing:0.117px;text-shadow:0 0 0.4px #fff">UHDA-P3 Gamut Coverage</div>
<div class="t" style="left:201.7px;top:67.2px;font-size:11px;color:#e0e0e0;letter-spacing:-0.104px;">Panasonic PX950</div>
<div class="t" style="left:990.0px;top:58.8px;font-size:10px;color:#fff;letter-spacing:0.037px;text-shadow:0 0 0.5px #fff">SpectraCal C6 HDR2000</div>
<div class="t" style="left:990.0px;top:73.7px;font-size:10px;color:#fff;letter-spacing:0.169px;text-shadow:0 0 0.5px #fff">LCD (LED White Wide Gamut)</div>
<div class="t" style="left:1172.5px;top:58.8px;font-size:10px;color:#fff;letter-spacing:0.135px;text-shadow:0 0 0.5px #fff">Source</div>
<div class="t" style="left:1306.5px;top:58.8px;font-size:10px;color:#fff;letter-spacing:0.241px;text-shadow:0 0 0.5px #fff">Direct Display Control</div>
<div class="t" style="left:203.1px;top:107.2px;font-size:31px;color:#fff;letter-spacing:0.042px;">Peak Luminance Stability</div>
<div class="t" style="left:214.8px;top:169.9px;font-size:14.5px;color:#fff;letter-spacing:-0.244px;">The Peak Luminance Stability test makes repeated peak</div>
<div class="t" style="left:214.8px;top:188.9px;font-size:14.5px;color:#fff;letter-spacing:-0.092px;">luminance measurements and continuously updates the</div>
<div class="t" style="left:214.8px;top:207.9px;font-size:14.5px;color:#fff;letter-spacing:-0.059px;">charts with the 500 most recent measurements.</div>
<div class="t" style="left:214.8px;top:237.5px;font-size:14.5px;color:#fff;letter-spacing:-0.107px;">This test is intended for R&amp;D and performance review</div>
<div class="t" style="left:214.8px;top:256.9px;font-size:14.5px;color:#fff;letter-spacing:-0.076px;">testing; it is not recommended for personal use.</div>
<div class="t" style="left:214.8px;top:287.7px;font-size:14.5px;color:#fff;letter-spacing:-0.026px;">Click the "Run Test" button to start the test.</div>
<div class="t" style="left:214.8px;top:317.9px;font-size:14.5px;color:#fff;letter-spacing:-0.161px;font-style:italic;">Caution: This test may cause image retention on certain</div>
<div class="t" style="left:214.8px;top:336.7px;font-size:14.5px;color:#fff;letter-spacing:-0.115px;font-style:italic;">display technologies. Use at your own risk. Portrait</div>
<div class="t" style="left:214.8px;top:355.7px;font-size:14.5px;color:#fff;letter-spacing:-0.225px;font-style:italic;">Displays Inc., assumes no responsibility for any display</div>
<div class="t" style="left:214.8px;top:374.9px;font-size:14.5px;color:#fff;letter-spacing:-0.116px;font-style:italic;">damage resulting from the use of this test.</div>
<div class="t" style="left:233.6px;top:453.6px;font-size:17.2px;color:#fff;transform-origin:0 0;transform:scaleX(0.9265);-webkit-text-stroke:0.3px #fff">White Level: 661.99 Nits</div>
<div class="t" style="left:362.0px;top:499.0px;font-size:10.5px;color:#d8d8d8;letter-spacing:0.072px;">CIE 1931 xy</div>
<div class="t" style="left:227.5px;top:510.6px;font-size:11px;color:#dcdcdc;letter-spacing:0.270px;-webkit-text-stroke:0.2px #dcdcdc">0.38</div>
<div class="t" style="left:227.5px;top:546.3px;font-size:11px;color:#dcdcdc;letter-spacing:0.270px;-webkit-text-stroke:0.2px #dcdcdc">0.36</div>
<div class="t" style="left:227.5px;top:582.3px;font-size:11px;color:#dcdcdc;letter-spacing:0.270px;-webkit-text-stroke:0.2px #dcdcdc">0.34</div>
<div class="t" style="left:227.5px;top:618.3px;font-size:11px;color:#dcdcdc;letter-spacing:0.270px;-webkit-text-stroke:0.2px #dcdcdc">0.32</div>
<div class="t" style="left:233.5px;top:655.0px;font-size:11px;color:#dcdcdc;letter-spacing:0.401px;-webkit-text-stroke:0.2px #dcdcdc">0.3</div>
<div class="t" style="left:227.5px;top:691.0px;font-size:11px;color:#dcdcdc;letter-spacing:0.270px;-webkit-text-stroke:0.2px #dcdcdc">0.28</div>
<div class="t" style="left:298.8px;top:709.1px;font-size:11px;color:#dcdcdc;letter-spacing:0.270px;-webkit-text-stroke:0.2px #dcdcdc">0.28</div>
<div class="t" style="left:359.4px;top:709.1px;font-size:11px;color:#dcdcdc;letter-spacing:0.401px;-webkit-text-stroke:0.2px #dcdcdc">0.3</div>
<div class="t" style="left:413.4px;top:709.1px;font-size:11px;color:#dcdcdc;letter-spacing:0.270px;-webkit-text-stroke:0.2px #dcdcdc">0.32</div>
<div class="t" style="left:470.9px;top:709.1px;font-size:11px;color:#dcdcdc;letter-spacing:0.270px;-webkit-text-stroke:0.2px #dcdcdc">0.34</div>
<div class="t" style="left:528.2px;top:709.1px;font-size:11px;color:#dcdcdc;letter-spacing:0.270px;-webkit-text-stroke:0.2px #dcdcdc">0.36</div>
<div class="t" style="left:1008.5px;top:208.3px;font-size:10.5px;color:#d8d8d8;letter-spacing:0.458px;">Luminance</div>
<div class="t" style="left:593.8px;top:216.5px;font-size:11px;color:#dcdcdc;letter-spacing:0.380px;-webkit-text-stroke:0.2px #dcdcdc">700</div>
<div class="t" style="left:593.8px;top:244.8px;font-size:11px;color:#dcdcdc;letter-spacing:0.380px;-webkit-text-stroke:0.2px #dcdcdc">650</div>
<div class="t" style="left:593.8px;top:273.1px;font-size:11px;color:#dcdcdc;letter-spacing:0.380px;-webkit-text-stroke:0.2px #dcdcdc">600</div>
<div class="t" style="left:593.8px;top:301.4px;font-size:11px;color:#dcdcdc;letter-spacing:0.380px;-webkit-text-stroke:0.2px #dcdcdc">550</div>
<div class="t" style="left:593.8px;top:329.7px;font-size:11px;color:#dcdcdc;letter-spacing:0.380px;-webkit-text-stroke:0.2px #dcdcdc">500</div>
<div class="t" style="left:593.8px;top:358.0px;font-size:11px;color:#dcdcdc;letter-spacing:0.380px;-webkit-text-stroke:0.2px #dcdcdc">450</div>
<div class="t" style="left:593.8px;top:386.3px;font-size:11px;color:#dcdcdc;letter-spacing:0.380px;-webkit-text-stroke:0.2px #dcdcdc">400</div>
<div class="t" style="left:593.8px;top:414.6px;font-size:11px;color:#dcdcdc;letter-spacing:0.380px;-webkit-text-stroke:0.2px #dcdcdc">350</div>
<div class="t" style="left:593.8px;top:442.9px;font-size:11px;color:#dcdcdc;letter-spacing:0.380px;-webkit-text-stroke:0.2px #dcdcdc">300</div>
<div class="t" style="left:593.8px;top:471.2px;font-size:11px;color:#dcdcdc;letter-spacing:0.380px;-webkit-text-stroke:0.2px #dcdcdc">250</div>
<div class="t" style="left:593.8px;top:499.5px;font-size:11px;color:#dcdcdc;letter-spacing:0.380px;-webkit-text-stroke:0.2px #dcdcdc">200</div>
<div class="t" style="left:593.8px;top:527.8px;font-size:11px;color:#dcdcdc;letter-spacing:0.380px;-webkit-text-stroke:0.2px #dcdcdc">150</div>
<div class="t" style="left:593.8px;top:556.1px;font-size:11px;color:#dcdcdc;letter-spacing:0.380px;-webkit-text-stroke:0.2px #dcdcdc">100</div>
<div class="t" style="left:600.3px;top:584.4px;font-size:11px;color:#dcdcdc;letter-spacing:0.375px;-webkit-text-stroke:0.2px #dcdcdc">50</div>
<div class="t" style="left:606.8px;top:612.7px;font-size:11px;color:#dcdcdc;letter-spacing:0.375px;-webkit-text-stroke:0.2px #dcdcdc">0</div>
<div class="t" style="left:711.0px;top:658.0px;font-size:20px;color:#fff;letter-spacing:0.303px;">Run Test</div>
<div class="t" style="left:1006.0px;top:658.0px;font-size:20px;color:#fff;letter-spacing:0.441px;">Stop Test</div>
<div class="t" style="left:1291.0px;top:658.0px;font-size:20px;color:#fff;letter-spacing:0.672px;">Export Data</div>
<div class="t" style="left:1288.7px;top:777.7px;font-size:21.5px;color:#3e3e3e;letter-spacing:0.272px;-webkit-text-stroke:0.75px #3e3e3e">Back</div>
<div class="t" style="left:1392.7px;top:777.7px;font-size:21.5px;color:#3e3e3e;letter-spacing:1.520px;-webkit-text-stroke:0.75px #3e3e3e">Next</div>
<div class="t" style="left:87.3px;top:815.9px;font-size:15px;color:#3a3a3a;letter-spacing:-0.336px;">Type here to search</div>
<div class="t" style="left:1124.2px;top:815.6px;font-size:15px;color:#333;letter-spacing:-0.790px;">31°C  Sunny</div>
<div class="t" style="left:1395.9px;top:808.9px;font-size:11.5px;color:#222;letter-spacing:-0.447px;">2:46 PM</div>
<div class="t" style="left:1386.6px;top:826.5px;font-size:11.7px;color:#222;letter-spacing:0.030px;">10/23/2025</div>
</body></html>
